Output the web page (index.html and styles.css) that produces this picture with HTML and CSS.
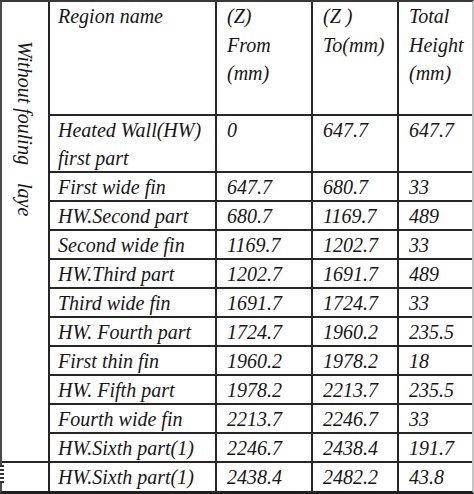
FILE: index.html
```html
<!DOCTYPE html>
<html lang="en">
<head>
<meta charset="utf-8">
<title>Regions</title>
<link rel="stylesheet" href="styles.css">
</head>
<body>
<div class="table">
  <div class="side"><span>Without fouling</span><span class="laye">laye</span></div>

  <div class="c name head">Region name</div>
  <div class="c head">(Z)<br>From<br>(mm)</div>
  <div class="c head">(Z )<br>To(mm)</div>
  <div class="c head">Total<br>Height<br>(mm)</div>

  <div class="c name">Heated Wall(HW)<br>first part</div>
  <div class="c">0</div>
  <div class="c">647.7</div>
  <div class="c">647.7</div>

  <div class="c name">First wide fin</div>
  <div class="c">647.7</div>
  <div class="c">680.7</div>
  <div class="c">33</div>

  <div class="c name">HW.Second part</div>
  <div class="c">680.7</div>
  <div class="c">1169.7</div>
  <div class="c">489</div>

  <div class="c name">Second wide fin</div>
  <div class="c">1169.7</div>
  <div class="c">1202.7</div>
  <div class="c">33</div>

  <div class="c name">HW.Third part</div>
  <div class="c">1202.7</div>
  <div class="c">1691.7</div>
  <div class="c">489</div>

  <div class="c name">Third wide fin</div>
  <div class="c">1691.7</div>
  <div class="c">1724.7</div>
  <div class="c">33</div>

  <div class="c name">HW. Fourth part</div>
  <div class="c">1724.7</div>
  <div class="c">1960.2</div>
  <div class="c">235.5</div>

  <div class="c name">First thin fin</div>
  <div class="c">1960.2</div>
  <div class="c">1978.2</div>
  <div class="c">18</div>

  <div class="c name">HW. Fifth part</div>
  <div class="c">1978.2</div>
  <div class="c">2213.7</div>
  <div class="c">235.5</div>

  <div class="c name">Fourth wide fin</div>
  <div class="c">2213.7</div>
  <div class="c">2246.7</div>
  <div class="c">33</div>

  <div class="c name">HW.Sixth part(1)</div>
  <div class="c">2246.7</div>
  <div class="c">2438.4</div>
  <div class="c">191.7</div>

  <div class="side2"><div class="frag"></div></div>
  <div class="c name">HW.Sixth part(1)</div>
  <div class="c">2438.4</div>
  <div class="c">2482.2</div>
  <div class="c">43.8</div>
</div>
</body>
</html>
```

FILE: styles.css
```css
html, body {
  margin: 0;
  padding: 0;
  background: #ffffff;
}

.table {
  box-sizing: border-box;
  width: 474px;
  display: grid;
  grid-template-columns: 46px 165px 94px 84px 73px;
  grid-template-rows: 112px 55px repeat(10, 27px) 28px;
  gap: 2px;
  background: #262626;
  border-top: 2px solid #3a3a3a;
  border-left: 2px solid #4a4a4a;
  border-right: 2px solid #c4c4c4;
  border-bottom: 3px solid #1e1e1e;
  font-family: "Liberation Serif", "Times New Roman", serif;
  font-style: italic;
  font-size: 20px;
  color: #161616;
}

.c {
  background: #ffffff;
  padding: 0 4px 0 10px;
  line-height: 28px;
  white-space: nowrap;
}

.c.name {
  padding-left: 8px;
}

.c.head {
  line-height: 28.5px;
}

.side {
  grid-column: 1;
  grid-row: 1 / span 12;
  background: #ffffff;
  writing-mode: vertical-rl;
  line-height: 46px;
  padding-top: 39px;
  white-space: nowrap;
}

.side .laye {
  margin-top: 18px;
}

.side2 {
  background: #ffffff;
  display: flex;
  align-items: center;
}

.frag {
  width: 4px;
  height: 18px;
  margin-left: -2px;
  margin-top: -6px;
  background: repeating-linear-gradient(to bottom, #333 0 2px, #fff 2px 4px);
}
```
